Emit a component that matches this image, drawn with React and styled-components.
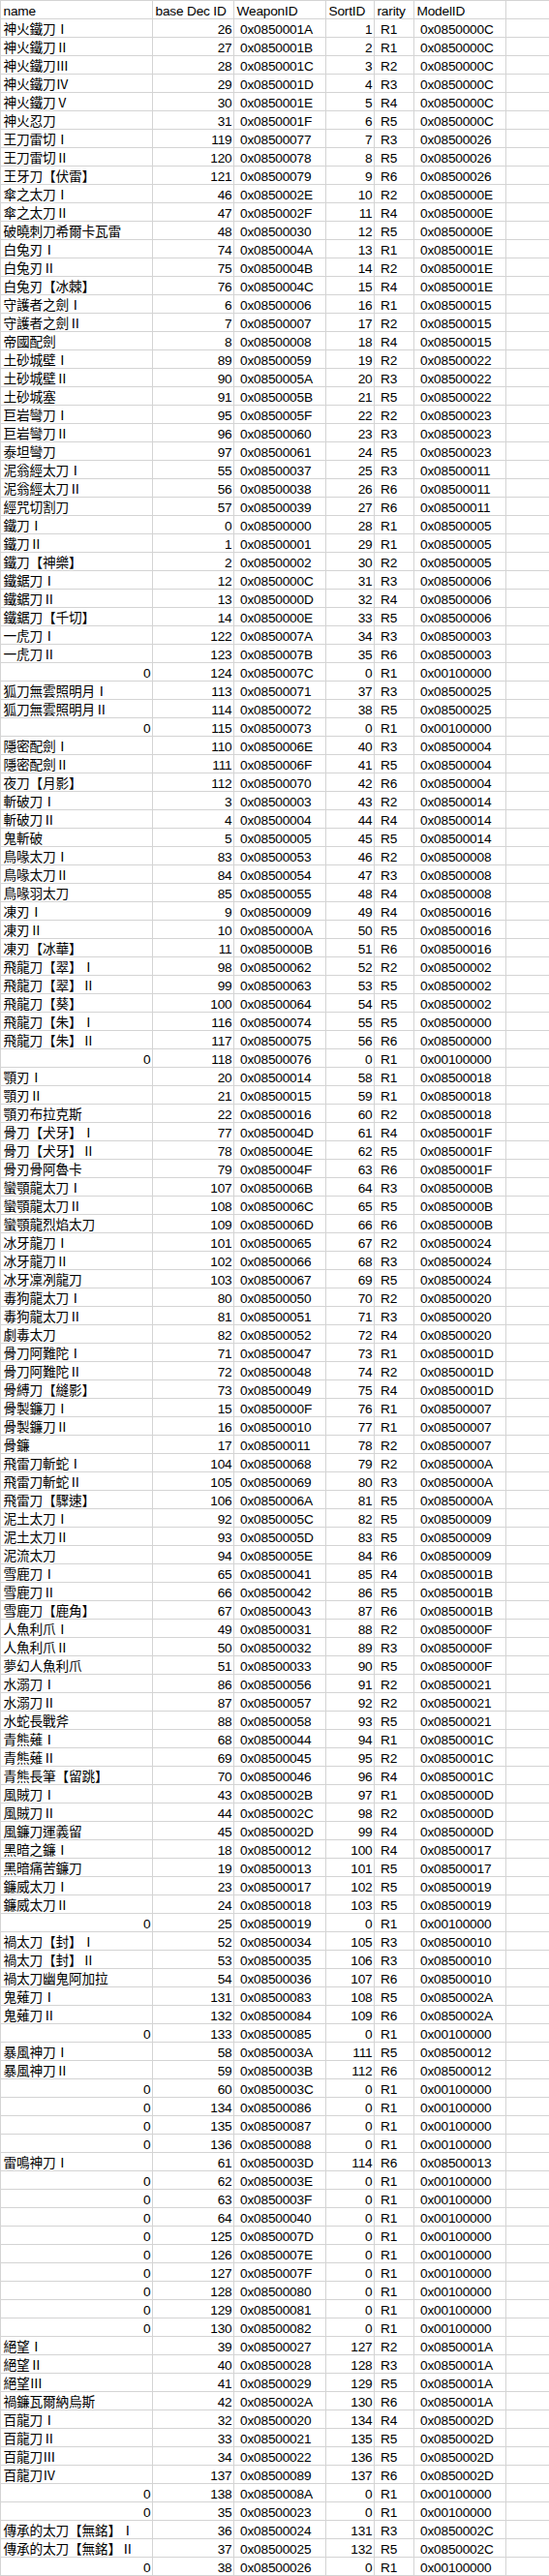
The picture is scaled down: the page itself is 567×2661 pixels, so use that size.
import React from "react";
import styled, { createGlobalStyle } from "styled-components";

// Sheet styles

const GlobalStyle = createGlobalStyle`
  html, body {
    margin: 0;
    padding: 0;
    background: #ffffff;
  }
`

const Sheet = styled.div`
  width: 567px;
  overflow: hidden;
  border-top: 1px solid #d4d4d4;
  background: #ffffff;
  color: #000000;
`

const Row = styled.div`
  display: grid;
  grid-template-columns: 158px 84px 95px 50px 41px 95px 1fr;
  height: 19px;
`

// a single spreadsheet cell, $align for numbers, $lead for values stored with a leading space
const Cell = styled.div`
  box-sizing: border-box;
  height: 19px;
  padding: 2px ${(p) => (p.$align === "right" ? "1.5px" : "2px")} 0
    ${(p) => (p.$lead ? "6px" : "2.5px")};
  border-right: 1px solid #d4d4d4;
  border-left: ${(p) => (p.$first ? "1px solid #d4d4d4" : "none")};
  border-bottom: 1px solid #d4d4d4;
  text-align: ${(p) => p.$align || "left"};
  font-family: "Liberation Sans", "Noto Sans CJK TC", Arial, sans-serif;
  font-size: 13.7px;
  letter-spacing: -0.2px;
  line-height: 18px;
  white-space: nowrap;
  overflow: hidden;
`

const Spare = styled(Cell)`
  border-right: none;
`

const headers = ["name", "base Dec ID", "WeaponID", "SortID", "rarity", "ModelID"];

// [name, dec, sort, rarity, model suffix]; rows with only dec are the empty "0" slots
const data = [
  ["神火鐵刀Ⅰ", 26, 1, 1, "0C"],
  ["神火鐵刀Ⅱ", 27, 2, 1, "0C"],
  ["神火鐵刀Ⅲ", 28, 3, 2, "0C"],
  ["神火鐵刀Ⅳ", 29, 4, 3, "0C"],
  ["神火鐵刀Ⅴ", 30, 5, 4, "0C"],
  ["神火忍刀", 31, 6, 5, "0C"],
  ["王刀雷切Ⅰ", 119, 7, 3, "26"],
  ["王刀雷切Ⅱ", 120, 8, 5, "26"],
  ["王牙刀【伏雷】", 121, 9, 6, "26"],
  ["傘之太刀Ⅰ", 46, 10, 2, "0E"],
  ["傘之太刀Ⅱ", 47, 11, 4, "0E"],
  ["破曉刺刀希爾卡瓦雷", 48, 12, 5, "0E"],
  ["白兔刃Ⅰ", 74, 13, 1, "1E"],
  ["白兔刃Ⅱ", 75, 14, 2, "1E"],
  ["白兔刃【冰棘】", 76, 15, 4, "1E"],
  ["守護者之劍Ⅰ", 6, 16, 1, "15"],
  ["守護者之劍Ⅱ", 7, 17, 2, "15"],
  ["帝國配劍", 8, 18, 4, "15"],
  ["土砂城壁Ⅰ", 89, 19, 2, "22"],
  ["土砂城壁Ⅱ", 90, 20, 3, "22"],
  ["土砂城塞", 91, 21, 5, "22"],
  ["巨岩彎刀Ⅰ", 95, 22, 2, "23"],
  ["巨岩彎刀Ⅱ", 96, 23, 3, "23"],
  ["泰坦彎刀", 97, 24, 5, "23"],
  ["泥翁經太刀Ⅰ", 55, 25, 3, "11"],
  ["泥翁經太刀Ⅱ", 56, 26, 6, "11"],
  ["經咒切割刀", 57, 27, 6, "11"],
  ["鐵刀Ⅰ", 0, 28, 1, "05"],
  ["鐵刀Ⅱ", 1, 29, 1, "05"],
  ["鐵刀【神樂】", 2, 30, 2, "05"],
  ["鐵鋸刀Ⅰ", 12, 31, 3, "06"],
  ["鐵鋸刀Ⅱ", 13, 32, 4, "06"],
  ["鐵鋸刀【千切】", 14, 33, 5, "06"],
  ["一虎刀Ⅰ", 122, 34, 3, "03"],
  ["一虎刀Ⅱ", 123, 35, 6, "03"],
  [null, 124],
  ["狐刀無雲照明月Ⅰ", 113, 37, 3, "25"],
  ["狐刀無雲照明月Ⅱ", 114, 38, 5, "25"],
  [null, 115],
  ["隱密配劍Ⅰ", 110, 40, 3, "04"],
  ["隱密配劍Ⅱ", 111, 41, 5, "04"],
  ["夜刀【月影】", 112, 42, 6, "04"],
  ["斬破刀Ⅰ", 3, 43, 2, "14"],
  ["斬破刀Ⅱ", 4, 44, 4, "14"],
  ["鬼斬破", 5, 45, 5, "14"],
  ["鳥喙太刀Ⅰ", 83, 46, 2, "08"],
  ["鳥喙太刀Ⅱ", 84, 47, 3, "08"],
  ["鳥喙羽太刀", 85, 48, 4, "08"],
  ["凍刃Ⅰ", 9, 49, 4, "16"],
  ["凍刃Ⅱ", 10, 50, 5, "16"],
  ["凍刃【冰華】", 11, 51, 6, "16"],
  ["飛龍刀【翠】Ⅰ", 98, 52, 2, "02"],
  ["飛龍刀【翠】Ⅱ", 99, 53, 5, "02"],
  ["飛龍刀【葵】", 100, 54, 5, "02"],
  ["飛龍刀【朱】Ⅰ", 116, 55, 5, "00"],
  ["飛龍刀【朱】Ⅱ", 117, 56, 6, "00"],
  [null, 118],
  ["顎刃Ⅰ", 20, 58, 1, "18"],
  ["顎刃Ⅱ", 21, 59, 1, "18"],
  ["顎刃布拉克斯", 22, 60, 2, "18"],
  ["骨刀【犬牙】Ⅰ", 77, 61, 4, "1F"],
  ["骨刀【犬牙】Ⅱ", 78, 62, 5, "1F"],
  ["骨刃骨阿魯卡", 79, 63, 6, "1F"],
  ["蠻顎龍太刀Ⅰ", 107, 64, 3, "0B"],
  ["蠻顎龍太刀Ⅱ", 108, 65, 5, "0B"],
  ["蠻顎龍烈焰太刀", 109, 66, 6, "0B"],
  ["冰牙龍刀Ⅰ", 101, 67, 2, "24"],
  ["冰牙龍刀Ⅱ", 102, 68, 3, "24"],
  ["冰牙凜冽龍刀", 103, 69, 5, "24"],
  ["毒狗龍太刀Ⅰ", 80, 70, 2, "20"],
  ["毒狗龍太刀Ⅱ", 81, 71, 3, "20"],
  ["劇毒太刀", 82, 72, 4, "20"],
  ["骨刀阿難陀Ⅰ", 71, 73, 1, "1D"],
  ["骨刀阿難陀Ⅱ", 72, 74, 2, "1D"],
  ["骨縛刀【縫影】", 73, 75, 4, "1D"],
  ["骨製鐮刀Ⅰ", 15, 76, 1, "07"],
  ["骨製鐮刀Ⅱ", 16, 77, 1, "07"],
  ["骨鐮", 17, 78, 2, "07"],
  ["飛雷刀斬蛇Ⅰ", 104, 79, 2, "0A"],
  ["飛雷刀斬蛇Ⅱ", 105, 80, 3, "0A"],
  ["飛雷刀【驟速】", 106, 81, 5, "0A"],
  ["泥土太刀Ⅰ", 92, 82, 5, "09"],
  ["泥土太刀Ⅱ", 93, 83, 5, "09"],
  ["泥流太刀", 94, 84, 6, "09"],
  ["雪鹿刀Ⅰ", 65, 85, 4, "1B"],
  ["雪鹿刀Ⅱ", 66, 86, 5, "1B"],
  ["雪鹿刀【鹿角】", 67, 87, 6, "1B"],
  ["人魚利爪Ⅰ", 49, 88, 2, "0F"],
  ["人魚利爪Ⅱ", 50, 89, 3, "0F"],
  ["夢幻人魚利爪", 51, 90, 5, "0F"],
  ["水溺刀Ⅰ", 86, 91, 2, "21"],
  ["水溺刀Ⅱ", 87, 92, 2, "21"],
  ["水蛇長戰斧", 88, 93, 5, "21"],
  ["青熊薙Ⅰ", 68, 94, 1, "1C"],
  ["青熊薙Ⅱ", 69, 95, 2, "1C"],
  ["青熊長筆【留跳】", 70, 96, 4, "1C"],
  ["風賊刀Ⅰ", 43, 97, 1, "0D"],
  ["風賊刀Ⅱ", 44, 98, 2, "0D"],
  ["風鐮刀運義留", 45, 99, 4, "0D"],
  ["黑暗之鐮Ⅰ", 18, 100, 4, "17"],
  ["黑暗痛苦鐮刀", 19, 101, 5, "17"],
  ["鐮威太刀Ⅰ", 23, 102, 5, "19"],
  ["鐮威太刀Ⅱ", 24, 103, 5, "19"],
  [null, 25],
  ["禍太刀【封】Ⅰ", 52, 105, 3, "10"],
  ["禍太刀【封】Ⅱ", 53, 106, 3, "10"],
  ["禍太刀幽鬼阿加拉", 54, 107, 6, "10"],
  ["鬼薙刀Ⅰ", 131, 108, 5, "2A"],
  ["鬼薙刀Ⅱ", 132, 109, 6, "2A"],
  [null, 133],
  ["暴風神刀Ⅰ", 58, 111, 5, "12"],
  ["暴風神刀Ⅱ", 59, 112, 6, "12"],
  [null, 60],
  [null, 134],
  [null, 135],
  [null, 136],
  ["雷鳴神刀Ⅰ", 61, 114, 6, "13"],
  [null, 62],
  [null, 63],
  [null, 64],
  [null, 125],
  [null, 126],
  [null, 127],
  [null, 128],
  [null, 129],
  [null, 130],
  ["絕望Ⅰ", 39, 127, 2, "1A"],
  ["絕望Ⅱ", 40, 128, 3, "1A"],
  ["絕望Ⅲ", 41, 129, 5, "1A"],
  ["禍鐮瓦爾納烏斯", 42, 130, 6, "1A"],
  ["百龍刀Ⅰ", 32, 134, 4, "2D"],
  ["百龍刀Ⅱ", 33, 135, 5, "2D"],
  ["百龍刀Ⅲ", 34, 136, 5, "2D"],
  ["百龍刀Ⅳ", 137, 137, 6, "2D"],
  [null, 138],
  [null, 35],
  ["傳承的太刀【無銘】Ⅰ", 36, 131, 3, "2C"],
  ["傳承的太刀【無銘】Ⅱ", 37, 132, 5, "2C"],
  [null, 38],
];

const weaponHex = (dec) =>
  "0x085" + dec.toString(16).toUpperCase().padStart(5, "0");

const App = () => {
  return (
    <>
      <GlobalStyle />
      <Sheet>
        <Row>
          {headers.map((h, i) => (
            <Cell key={h} $first={i === 0}>
              {h}
            </Cell>
          ))}
          <Spare />
        </Row>
        {data.map(([name, dec, sort, rarity, model], i) => {
          const empty = name === null;
          return (
            <Row key={i}>
              <Cell $first $align={empty ? "right" : "left"}>
                {empty ? 0 : name}
              </Cell>
              <Cell $align="right">{dec}</Cell>
              <Cell $lead>{weaponHex(dec)}</Cell>
              <Cell $align="right">{empty ? 0 : sort}</Cell>
              <Cell $lead>{"R" + (empty ? 1 : rarity)}</Cell>
              <Cell $lead>{empty ? "0x00100000" : "0x085000" + model}</Cell>
              <Spare />
            </Row>
          );
        })}
      </Sheet>
    </>
  );
};

export default App;
